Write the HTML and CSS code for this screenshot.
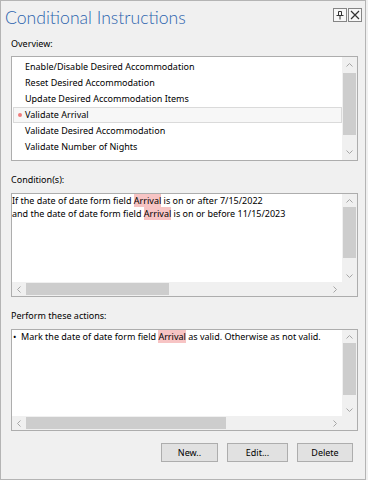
FILE: index.html
```html
<!DOCTYPE html>
<html lang="en">
<head>
    <meta charset="UTF-8">
    <meta name="viewport" content="width=device-width, initial-scale=1.0">
    <title>Conditional Instructions</title>
    <link rel="stylesheet" href="styles.css">
</head>
<body>
    <div class="dialog">
        <div class="titlebar">
            <h1 class="title">Conditional Instructions</h1>
            <div class="title-buttons">
                <span class="tbtn">
                    <svg width="10" height="10" viewBox="0 0 10 10"><path d="M3.5 1.5h3v4h-3zM1.5 5.5h7M5 5.5v4" fill="none" stroke="#333" stroke-width="1"/></svg>
                </span>
                <span class="tbtn">
                    <svg width="10" height="10" viewBox="0 0 10 10"><path d="M1 1l8 8M9 1l-8 8" fill="none" stroke="#333" stroke-width="1.2"/></svg>
                </span>
            </div>
        </div>

        <div class="content">
            <div class="label label-first">Overview:</div>
            <div class="box list-box">
                <ul class="list">
                    <li>Enable/Disable Desired Accommodation</li>
                    <li>Reset Desired Accommodation</li>
                    <li>Update Desired Accommodation Items</li>
                    <li class="selected"><span class="dot"></span>Validate Arrival</li>
                    <li>Validate Desired Accommodation</li>
                    <li>Validate Number of Nights</li>
                </ul>
                <div class="vscroll list-scroll">
                    <div class="arrow"><svg width="7" height="4" viewBox="0 0 7 4"><path d="M0.5 3.5l3-3 3 3" fill="none" stroke="#a6a6a6"/></svg></div>
                    <div class="track"><div class="thumb"></div></div>
                    <div class="arrow"><svg width="7" height="4" viewBox="0 0 7 4"><path d="M0.5 0.5l3 3 3-3" fill="none" stroke="#a6a6a6"/></svg></div>
                </div>
            </div>

            <div class="label">Condition(s):</div>
            <div class="box text-box cond-box">
                <div class="text">
                    <div>If the date of date form field <span class="mark">Arrival</span> is on or after 7/15/2022</div>
                    <div>and the date of date form field <span class="mark">Arrival</span> is on or before 11/15/2023</div>
                </div>
                <div class="vscroll">
                    <div class="arrow"><svg width="7" height="4" viewBox="0 0 7 4"><path d="M0.5 3.5l3-3 3 3" fill="none" stroke="#a6a6a6"/></svg></div>
                    <div class="track"><div class="thumb"></div></div>
                    <div class="arrow"><svg width="7" height="4" viewBox="0 0 7 4"><path d="M0.5 0.5l3 3 3-3" fill="none" stroke="#a6a6a6"/></svg></div>
                </div>
                <div class="hscroll">
                    <div class="arrow"><svg width="4" height="7" viewBox="0 0 4 7"><path d="M3.5 0.5l-3 3 3 3" fill="none" stroke="#a6a6a6"/></svg></div>
                    <div class="track"><div class="thumb"></div></div>
                    <div class="arrow"><svg width="4" height="7" viewBox="0 0 4 7"><path d="M0.5 0.5l3 3-3 3" fill="none" stroke="#a6a6a6"/></svg></div>
                </div>
                <div class="corner"></div>
            </div>

            <div class="label">Perform these actions:</div>
            <div class="box text-box action-box">
                <div class="text">
                    <div class="bullet-line"><span class="bullet">&bull;</span>Mark the date of date form field <span class="mark">Arrival</span> as valid. Otherwise as not valid.</div>
                </div>
                <div class="vscroll">
                    <div class="arrow"><svg width="7" height="4" viewBox="0 0 7 4"><path d="M0.5 3.5l3-3 3 3" fill="none" stroke="#a6a6a6"/></svg></div>
                    <div class="track"><div class="thumb"></div></div>
                    <div class="arrow"><svg width="7" height="4" viewBox="0 0 7 4"><path d="M0.5 0.5l3 3 3-3" fill="none" stroke="#a6a6a6"/></svg></div>
                </div>
                <div class="hscroll">
                    <div class="arrow"><svg width="4" height="7" viewBox="0 0 4 7"><path d="M3.5 0.5l-3 3 3 3" fill="none" stroke="#a6a6a6"/></svg></div>
                    <div class="track"><div class="thumb"></div></div>
                    <div class="arrow"><svg width="4" height="7" viewBox="0 0 4 7"><path d="M0.5 0.5l3 3-3 3" fill="none" stroke="#a6a6a6"/></svg></div>
                </div>
                <div class="corner"></div>
            </div>

            <div class="buttons">
                <button class="btn btn-new">New..</button>
                <button class="btn btn-edit">Edit...</button>
                <button class="btn btn-delete">Delete</button>
            </div>
        </div>
    </div>
</body>
</html>
```

FILE: styles.css
```css
body {
    margin: 0;
    background-color: #f0f0f0;
    font-family: "Noto Sans", "Open Sans", sans-serif;
    font-size: 9px;
    color: #000;
}
.dialog {
    width: 366px;
    height: 480px;
    box-sizing: border-box;
    border: 1px solid #b4b4b4;
    background-color: #f0f0f0;
}
.titlebar {
    display: flex;
    justify-content: space-between;
    align-items: flex-start;
    height: 34px;
    padding: 0 3px 0 4px;
}
.title {
    margin: 5px 0 0 0;
    font-family: Lato, "Noto Sans", sans-serif;
    font-weight: 300;
    font-size: 17.6px;
    line-height: 24px;
    color: #2c64ae;
}
.title-buttons {
    display: flex;
    gap: 1px;
    margin-top: 7px;
}
.tbtn {
    width: 14px;
    height: 14px;
    box-sizing: border-box;
    border: 1px solid #858585;
    background-color: #f7f7f7;
    display: flex;
    align-items: center;
    justify-content: center;
}
.content {
    padding: 0 7px 0 10px;
}
.label {
    height: 16px;
    line-height: 16px;
    margin: 11px 0 5px 0;
}
.label-first {
    margin-top: 1px;
    margin-bottom: 4px;
}
.box {
    border: 1px solid #adadad;
    background-color: #fff;
}
.list-box {
    display: flex;
    height: 105px;
    box-sizing: border-box;
}
.list {
    flex: 1;
    list-style: none;
    margin: 0;
    padding: 2px 0 0 1px;
}
.list li {
    height: 16px;
    box-sizing: border-box;
    line-height: 14px;
    padding-left: 11px;
    border: 1px solid transparent;
    position: relative;
}
.list li.selected {
    background-color: #f7f7f7;
    border-color: #dadada;
}
.dot {
    position: absolute;
    left: 4px;
    top: 5px;
    width: 4px;
    height: 4px;
    border-radius: 50%;
    background-color: #f07c7c;
}
.vscroll {
    width: 15px;
    display: flex;
    flex-direction: column;
    background-color: #f0f0f0;
}
.vscroll .arrow {
    height: 13px;
    display: flex;
    align-items: center;
    justify-content: center;
}
.list-scroll .arrow {
    height: 16px;
}
.vscroll .track {
    flex: 1;
    display: flex;
    flex-direction: column;
}
.vscroll .thumb {
    margin: 0 1px;
    background-color: #cdcdcd;
}
.list-scroll .thumb {
    height: 62px;
}
.cond-box .vscroll .thumb {
    height: 51px;
}
.action-box .vscroll .thumb {
    height: 52px;
}
.text-box {
    display: grid;
    grid-template-columns: 1fr 15px;
    grid-template-rows: 1fr 14px;
    box-sizing: border-box;
}
.cond-box {
    height: 104px;
}
.action-box {
    height: 102px;
}
.text {
    line-height: 13px;
    white-space: nowrap;
    overflow: hidden;
}
.mark {
    background-color: #f7c4c4;
}
.bullet-line {
    padding-left: 1px;
}
.bullet {
    display: inline-block;
    width: 8px;
}
.hscroll {
    display: flex;
    background-color: #f0f0f0;
}
.hscroll .arrow {
    width: 14px;
    display: flex;
    align-items: center;
    justify-content: center;
}
.hscroll .track {
    flex: 1;
    display: flex;
}
.hscroll .thumb {
    margin: 1px 0;
    background-color: #cdcdcd;
}
.cond-box .hscroll .thumb {
    width: 143px;
}
.action-box .hscroll .thumb {
    width: 200px;
}
.corner {
    background-color: #f0f0f0;
}
.buttons {
    display: flex;
    justify-content: flex-end;
    gap: 9px;
    margin-top: 12px;
    padding-right: 5px;
}
.btn {
    height: 19px;
    padding: 0;
    border: 1px solid #adadad;
    background-color: #e1e1e1;
    font-family: "Noto Sans", "Open Sans", sans-serif;
    font-size: 9px;
    color: #000;
}
.btn-new {
    width: 57px;
}
.btn-edit {
    width: 61px;
}
.btn-delete {
    width: 56px;
}
```
